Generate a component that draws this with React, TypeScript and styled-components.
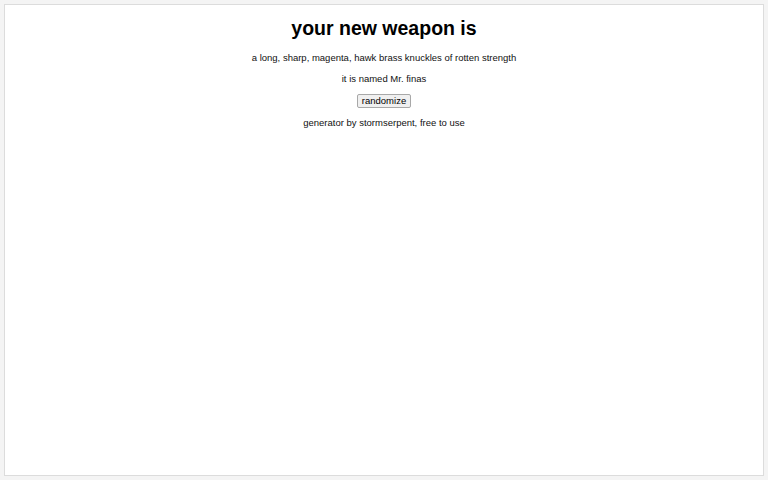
import React from "react";
import styled, { createGlobalStyle } from "styled-components";

const Global = createGlobalStyle`
  html, body {
    margin: 0;
    padding: 0;
    background: #f4f4f4;
  }
  body {
    padding: 4px;
    font-family: "Liberation Sans", Arial, sans-serif;
  }
`;

const Frame = styled.div`
  box-sizing: border-box;
  width: 760px;
  height: 472px;
  background: #ffffff;
  border: 1px solid #dcdcdc;
  display: flex;
  flex-direction: column;
  align-items: center;
  padding-top: 11px;
`;

const Title = styled.h1`
  margin: 0;
  font-size: 19.5px;
  font-weight: bold;
  color: #000;
  line-height: 24px;
`;

const Line = styled.p<{ $top: number }>`
  margin: ${(p) => p.$top}px 0 0;
  font-size: 9.5px;
  line-height: 12px;
  color: #111;
`;

const Button = styled.button`
  margin-top: 9px;
  font-family: "Liberation Sans", Arial, sans-serif;
  font-size: 9.5px;
  line-height: 12px;
  height: 14px;
  padding: 0 4px;
  background: #f0f0f0;
  border: 1px solid #a8a8a8;
  border-radius: 2px;
  color: #000;
`;

export default function App() {
  return (
    <>
      <Global />
      <Frame>
        <Title>your new weapon is</Title>
        <Line $top={12}>a long, sharp, magenta, hawk brass knuckles of rotten strength</Line>
        <Line $top={9}>it is named Mr. finas</Line>
        <Button>randomize</Button>
        <Line $top={9}>generator by stormserpent, free to use</Line>
      </Frame>
    </>
  );
}
